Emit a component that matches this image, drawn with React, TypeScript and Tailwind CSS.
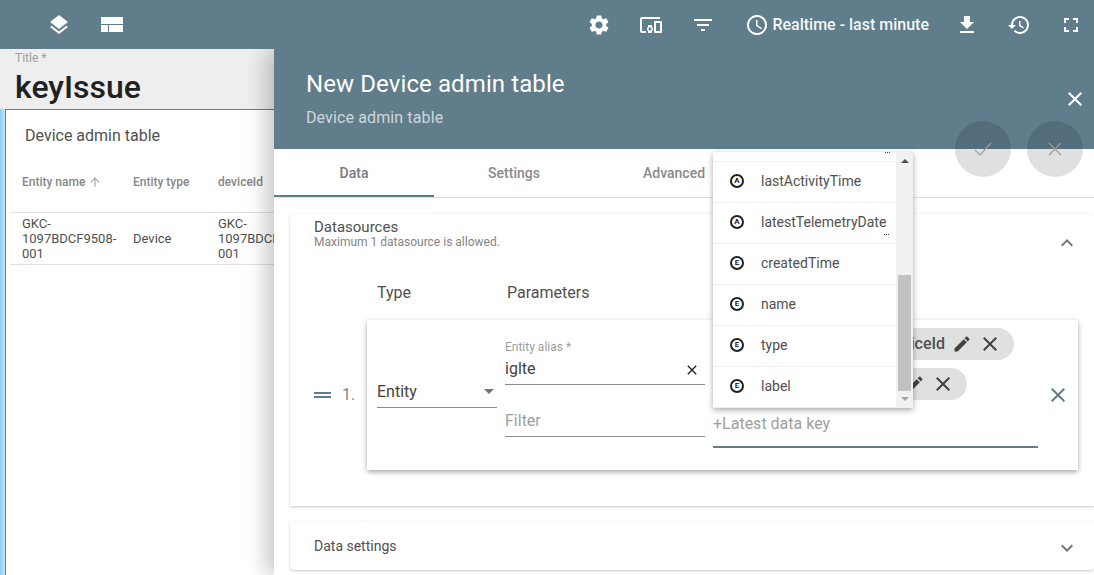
import React from 'react';

const paths = {
  layers: 'M11.99 18.54l-7.37-5.73L3 14.07l9 7 9-7-1.63-1.27-7.38 5.74zM12 16l7.36-5.73L21 9l-9-7-9 7 1.63 1.27L12 16z',
  settings: 'M19.14 12.94c.04-.3.06-.61.06-.94 0-.32-.02-.64-.07-.94l2.03-1.58c.18-.14.23-.41.12-.61l-1.92-3.32c-.12-.22-.37-.29-.59-.22l-2.39.96c-.5-.38-1.03-.7-1.62-.94l-.36-2.54c-.04-.24-.24-.41-.48-.41h-3.84c-.24 0-.43.17-.47.41l-.36 2.54c-.59.24-1.13.57-1.62.94l-2.39-.96c-.22-.08-.47 0-.59.22L2.74 8.87c-.12.21-.08.47.12.61l2.03 1.58c-.05.3-.09.63-.09.94s.02.64.07.94l-2.03 1.58c-.18.14-.23.41-.12.61l1.92 3.32c.12.22.37.29.59.22l2.39-.96c.5.38 1.03.7 1.62.94l.36 2.54c.05.24.24.41.48.41h3.84c.24 0 .44-.17.47-.41l.36-2.54c.59-.24 1.13-.56 1.62-.94l2.39.96c.22.08.47 0 .59-.22l1.92-3.32c.12-.22.07-.47-.12-.61l-2.01-1.58zM12 15.6c-1.98 0-3.6-1.62-3.6-3.6s1.62-3.6 3.6-3.6 3.6 1.62 3.6 3.6-1.62 3.6-3.6 3.6z',
  devices: 'M3 6h18V4H3c-1.1 0-2 .9-2 2v12c0 1.1.9 2 2 2h4v-2H3V6zm10 6H9v1.78c-.61.55-1 1.33-1 2.22s.39 1.67 1 2.22V20h4v-1.78c.61-.55 1-1.34 1-2.22s-.39-1.67-1-2.22V12zm-2 5.5c-.83 0-1.5-.67-1.5-1.5s.67-1.5 1.5-1.5 1.5.67 1.5 1.5-.67 1.5-1.5 1.5zM22 8h-6c-.5 0-1 .5-1 1v10c0 .5.5 1 1 1h6c.5 0 1-.5 1-1V9c0-.5-.5-1-1-1zm-1 10h-4v-8h4v8z',
  filter: 'M10 18h4v-2h-4v2zM3 6v2h18V6H3zm3 7h12v-2H6v2z',
  schedule: 'M11.99 2C6.47 2 2 6.48 2 12s4.47 10 9.99 10C17.52 22 22 17.52 22 12S17.52 2 11.99 2zM12 20c-4.42 0-8-3.58-8-8s3.58-8 8-8 8 3.58 8 8-3.58 8-8 8zm.5-13H11v6l5.25 3.15.75-1.23-4.5-2.67z',
  download: 'M19 9h-4V3H9v6H5l7 7 7-7zM5 18v2h14v-2H5z',
  history: 'M13 3c-4.97 0-9 4.03-9 9H1l3.89 3.89.07.14L9 12H6c0-3.87 3.13-7 7-7s7 3.13 7 7-3.13 7-7 7c-1.93 0-3.68-.79-4.94-2.06l-1.42 1.42C8.27 19.99 10.51 21 13 21c4.97 0 9-4.03 9-9s-4.03-9-9-9zm-1 5v5l4.28 2.54.72-1.21-3.5-2.08V8H12z',
  fullscreen: 'M7 14H5v5h5v-2H7v-3zm-2-4h2V7h3V5H5v5zm12 7h-3v2h5v-5h-2v3zM14 5v2h3v3h2V5h-5z',
  edit: 'M3 17.25V21h3.75L17.81 9.94l-3.75-3.75L3 17.25zM20.71 7.04c.39-.39.39-1.02 0-1.41l-2.34-2.34c-.39-.39-1.02-.39-1.41 0l-1.83 1.83 3.75 3.75 1.83-1.83z',
  close: 'M19 6.41L17.59 5 12 10.59 6.41 5 5 6.41 10.59 12 5 17.59 6.41 19 12 13.41 17.59 19 19 17.59 13.41 12z',
  less: 'M12 8l-6 6 1.41 1.41L12 10.83l4.59 4.58L18 14z',
  more: 'M16.59 8.59L12 13.17 7.41 8.59 6 10l6 6 6-6z',
  up: 'M4 12l1.41 1.41L11 7.83V20h2V7.83l5.58 5.59L20 12l-8-8-8 8z',
};

const Icon = ({ d, className = 'w-6 h-6' }: { d: string; className?: string }) => (
  <svg viewBox="0 0 24 24" fill="currentColor" className={`shrink-0 ${className}`}>
    <path d={d} />
  </svg>
);

const KeyRow = ({ letter, name }: { letter: string; name: string }) => (
  <div className="flex items-center h-[41px] border-b border-[#eeeeee] pl-[17px] pb-[2px] shrink-0">
    <span className="flex items-center justify-center w-[14px] h-[14px] rounded-full border-2 border-[#212121] text-[8px] font-medium text-black leading-none">
      {letter}
    </span>
    <span className="ml-[17px] text-sm text-[#505050]">{name}</span>
  </div>
);

const Dots = ({ className }: { className: string }) => (
  <span className={`absolute flex gap-[1px] ${className}`}>
    <i className="w-[1px] h-[1px] bg-[#424242]" />
    <i className="w-[1px] h-[1px] bg-[#424242]" />
    <i className="w-[1px] h-[1px] bg-[#424242]" />
  </span>
);

const Chip = ({ width, label }: { width: string; label: string }) => (
  <div className={`flex items-center justify-end h-8 rounded-2xl bg-[#e0e0e0] pr-[12px] text-[#424242] ${width}`}>
    <span className="text-base font-medium mr-[7px] text-[#505050]">{label}</span>
    <Icon d={paths.edit} className="w-5 h-5" />
    <Icon d={paths.close} className="w-6 h-6 ml-[6px]" />
  </div>
);

export default function App() {
  return (
    <div className="relative w-[1094px] h-[575px] overflow-hidden bg-white text-[#424242] font-['Roboto',sans-serif]">
      {/* Top toolbar */}
      <div className="relative z-10 flex items-center h-[49px] bg-[#607d8b] text-white">
        <div className="flex items-center gap-[30px] pl-[47px]">
          <Icon d={paths.layers} />
          <svg viewBox="0 0 22 16" fill="currentColor" className="w-[22px] h-[16px]">
            <rect x="0" y="0" width="22" height="7" />
            <rect x="0" y="8" width="7" height="7" />
            <rect x="8" y="8" width="14" height="7" />
          </svg>
        </div>
        <div className="flex items-center ml-auto pr-[11px]">
          <Icon d={paths.settings} />
          <Icon d={paths.devices} className="w-6 h-6 ml-[28px]" />
          <Icon d={paths.filter} className="w-6 h-6 ml-[28px]" />
          <Icon d={paths.schedule} className="w-6 h-6 ml-[30px]" />
          <span className="ml-[3px] text-base font-medium text-white/95">Realtime - last minute</span>
          <Icon d={paths.download} className="w-6 h-6 ml-[26px]" />
          <Icon d={paths.history} className="w-6 h-6 ml-[28px]" />
          <Icon d={paths.fullscreen} className="w-6 h-6 ml-[28px]" />
        </div>
      </div>

      {/* Dashboard behind the drawer */}
      <div className="w-[274px] overflow-hidden">
        <div className="h-[60px] bg-[#eeeeee] pl-[15px] pt-[2px]">
          <div className="text-xs leading-[14px] text-[#9e9e9e]">Title *</div>
          <div className="text-[32px] leading-[38px] font-medium text-[#212121] mt-[3px]">keyIssue</div>
        </div>
        <div className="h-[466px] ml-[5px] w-[300px] border-l border-t border-[#1e93d6] bg-white pt-[14px]">
          <div className="pl-[19px] text-base leading-6 text-[#505050]">Device admin table</div>
          <div className="flex items-center h-[65px] ml-[4px] border-b border-[#e0e0e0] pl-[12px] pt-[4px] text-xs font-medium text-[#868686]">
            <span className="flex items-center w-[111px] shrink-0">
              Entity name
              <Icon d={paths.up} className="w-[14px] h-[14px] ml-[3px] text-[#a8a8a8]" />
            </span>
            <span className="w-[85px] shrink-0">Entity type</span>
            <span>deviceId</span>
          </div>
          <div className="flex items-center h-[52px] ml-[4px] border-b border-[#e0e0e0] pl-[12px] text-[13px] leading-[15px] text-[#505050]">
            <span className="w-[111px] shrink-0">GKC-<br />1097BDCF9508-<br />001</span>
            <span className="w-[85px] shrink-0">Device</span>
            <span className="whitespace-nowrap">GKC-<br />1097BDCF9508-<br />001</span>
          </div>
        </div>
      </div>

      {/* Light blue edge of the selected widget */}
      <div className="absolute left-0 top-[109px] w-[5px] h-[466px] bg-gradient-to-r from-[#8dcdf0] to-[#c4e5f8]" />

      {/* Side drawer */}
      <div className="absolute left-[274px] top-[49px] right-0 bottom-0 flex flex-col bg-white shadow-[-8px_0_20px_rgba(0,0,0,0.22)]">
        <div className="relative h-[100px] shrink-0 bg-[#607d8b] pl-[32px] pt-[17px] text-white">
          <div className="text-2xl leading-9 tracking-[0.1px]">New Device admin table</div>
          <div className="text-base leading-6 mt-[4px] tracking-[0.12px] text-white/70">Device admin table</div>
          <div className="absolute right-[7px] top-[38px]">
            <Icon d={paths.close} />
          </div>
        </div>

        <div className="flex h-[49px] shrink-0 border-b border-[#e0e0e0] pt-[1px] text-sm font-medium text-[#8a8a8a]">
          <div className="flex items-center justify-center w-40 h-[47px] border-b-2 border-[#607d8b] pt-[1px] text-[#7a7a7a]">Data</div>
          <div className="flex items-center justify-center w-40 h-[47px] pb-[1px]">Settings</div>
          <div className="flex items-center justify-center w-40 h-[47px] pb-[1px]">Advanced</div>
        </div>

        <div className="flex-1 overflow-hidden pt-[16px] pl-[16px]">
          {/* Datasources panel */}
          <div className="h-[292px] rounded-t-[4px] bg-white shadow-[0_1px_3px_rgba(0,0,0,0.22)]">
            <div className="flex items-start pl-[24px] pr-[15px] h-[92px] pt-[5px]">
              <div>
                <div className="text-[15px] leading-[17px] text-[#505050]">Datasources</div>
                <div className="text-xs leading-[13px] text-[#858585]">Maximum 1 datasource is allowed.</div>
              </div>
              <div className="ml-auto mt-[12px] text-[#757575]">
                <Icon d={paths.less} />
              </div>
            </div>
            <div className="flex pl-[87px] text-base leading-6 text-[#505050] -mt-[25px] h-[39px]">
              <span className="w-[130px]">Type</span>
              <span>Parameters</span>
            </div>
            <div className="flex items-center pl-[24px]">
              <div className="flex flex-col gap-[2px] w-[17px]">
                <div className="h-[2px] bg-[#607d8b]" />
                <div className="h-[2px] bg-[#607d8b]" />
              </div>
              <span className="w-[36px] pl-[11px] text-base text-[#858585]">1.</span>
              <div className="flex w-[711px] h-[150px] bg-white pl-[10px] shadow-[0_2px_5px_rgba(0,0,0,0.35)]">
                <div className="w-[120px] mt-[55px] shrink-0">
                  <div className="flex items-center justify-between h-[33px] pt-[1px] border-b border-[#8a8a8a] text-base pr-[3px]">
                    Entity
                    <span className="w-0 h-0 border-x-[5px] border-x-transparent border-t-[5px] border-t-[#757575]" />
                  </div>
                </div>
                <div className="w-[200px] ml-[8px] mt-[21px] shrink-0">
                  <div className="text-xs leading-[12px] text-[#9e9e9e]">Entity alias *</div>
                  <div className="flex items-center justify-between h-[32px] border-b border-[#8a8a8a] text-base">
                    iglte
                    <Icon d={paths.close} className="w-4 h-4 mr-[5px] mt-[3px] text-[#212121]" />
                  </div>
                  <div className="flex items-center h-[52px] pt-[20px] border-b border-[#8a8a8a] text-base text-[#9e9e9e]">Filter</div>
                </div>
                <div className="w-[325px] ml-[8px] mt-[8px] shrink-0">
                  <Chip width="w-[301px]" label="deviceId" />
                  <div className="mt-[8px]">
                    <Chip width="w-[254px]" label="active" />
                  </div>
                  <div className="flex items-center h-[48px] pt-[2px] border-b-2 border-[#607d8b] text-base text-[#9e9e9e]">+Latest data key</div>
                </div>
                <div className="ml-[8px] self-center text-[#607d8b]">
                  <Icon d={paths.close} />
                </div>
              </div>
            </div>
          </div>

          {/* Data settings panel */}
          <div className="flex items-center h-[48px] mt-[16px] pl-[24px] pr-[15px] rounded-b-[4px] bg-white shadow-[0_1px_3px_rgba(0,0,0,0.22)] text-sm text-[#505050]">
            Data settings
            <div className="ml-auto mt-[4px] text-[#757575]">
              <Icon d={paths.more} />
            </div>
          </div>
        </div>
      </div>

      {/* Disabled action buttons */}
      <div className="absolute left-[955px] top-[121px] flex gap-4">
        <div className="flex items-center justify-center w-14 h-14 rounded-full bg-black/12 text-[#9e9e9e]">
          <svg viewBox="0 0 24 24" fill="none" stroke="currentColor" strokeWidth="1.2" className="w-6 h-6">
            <path d="M4 13l5 5L20 6" />
          </svg>
        </div>
        <div className="flex items-center justify-center w-14 h-14 rounded-full bg-black/12 text-[#9e9e9e]">
          <svg viewBox="0 0 24 24" fill="none" stroke="currentColor" strokeWidth="1.2" className="w-6 h-6">
            <path d="M6 6l12 12M18 6L6 18" />
          </svg>
        </div>
      </div>

      {/* Latest data key autocomplete */}
      <div className="absolute left-[713px] top-[152px] flex w-[200px] h-[256px] bg-white shadow-[0_2px_6px_rgba(0,0,0,0.35)]">
        <div className="relative flex-1 overflow-hidden">
          <div className="h-[10px] border-b border-[#eeeeee]" />
          <KeyRow letter="A" name="lastActivityTime" />
          <KeyRow letter="A" name="latestTelemetryDate" />
          <KeyRow letter="E" name="createdTime" />
          <KeyRow letter="E" name="name" />
          <KeyRow letter="E" name="type" />
          <KeyRow letter="E" name="label" />
          <Dots className="right-[6px] top-0" />
          <Dots className="right-[7px] top-[82px]" />
        </div>
        <div className="flex flex-col items-center w-[17px] bg-[#f1f1f1]">
          <div className="h-[123px] w-full flex justify-center pt-[7px]">
            <span className="w-0 h-0 border-x-[4px] border-x-transparent border-b-[4px] border-b-[#505050]" />
          </div>
          <div className="h-[116px] w-[13px] bg-[#c1c1c1]" />
          <div className="flex-1 pt-[6px]">
            <span className="block w-0 h-0 border-x-[4px] border-x-transparent border-t-[4px] border-t-[#a3a3a3]" />
          </div>
        </div>
      </div>
    </div>
  );
}
